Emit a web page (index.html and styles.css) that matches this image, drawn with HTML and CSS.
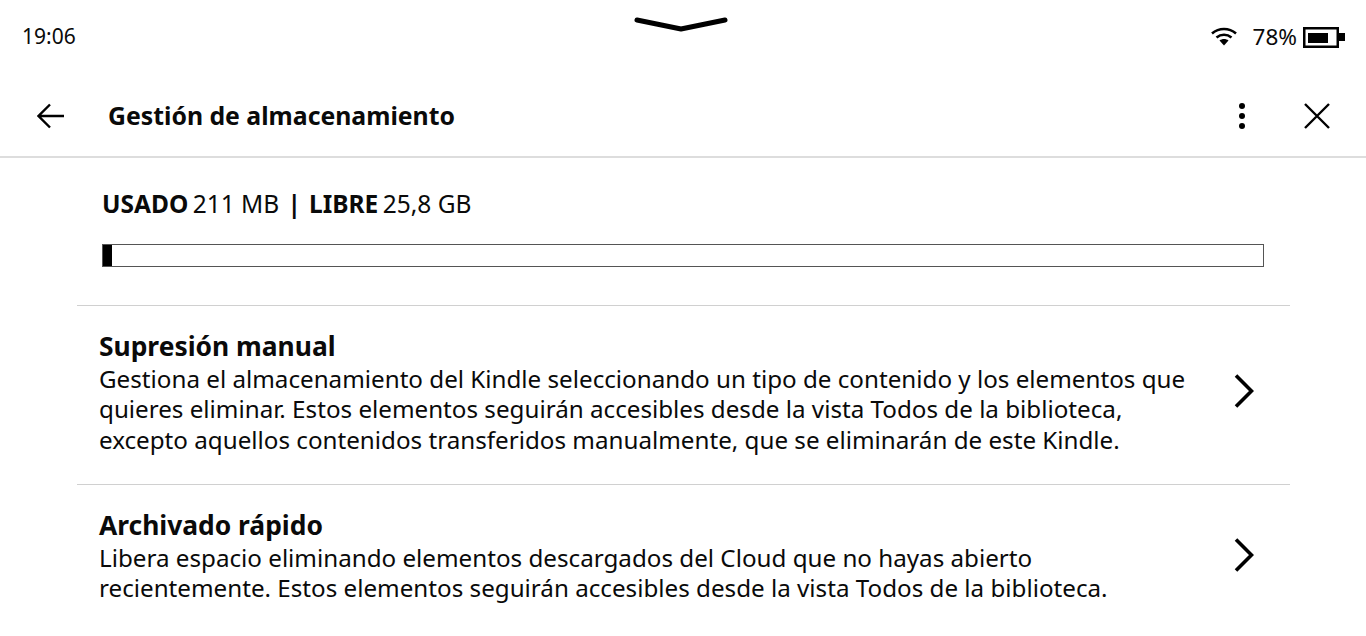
FILE: index.html
```html
<!DOCTYPE html>
<html lang="es">
<head>
<meta charset="utf-8">
<title>Gestión de almacenamiento</title>
<link rel="stylesheet" href="styles.css">
</head>
<body>
<div class="page">
  <div class="status">
    <span class="time">19:06</span>
    <svg class="handle" width="94" height="16" viewBox="0 0 94 16"><path d="M3 3 L47 12 L91 3" fill="none" stroke="#000" stroke-width="5" stroke-linecap="round" stroke-linejoin="round"/></svg>
    <div class="status-right">
      <svg class="wifi" width="26" height="19" viewBox="0 0 26 19"><path d="M1 6.5 C8 0.5 18 0.5 25 6.5" fill="none" stroke="#000" stroke-width="2.6"/><path d="M5.5 10.5 C10 6.8 16 6.8 20.5 10.5" fill="none" stroke="#000" stroke-width="2.6"/><path d="M8.5 13.6 C11 11.6 15 11.6 17.5 13.6 L13 18.5 Z" fill="#000"/></svg>
      <span class="pct">78%</span>
      <svg class="battery" width="42" height="21" viewBox="0 0 42 21"><rect x="1.25" y="1.25" width="33.5" height="18.5" fill="none" stroke="#000" stroke-width="2.5"/><rect x="5" y="6" width="20" height="10" fill="#000"/><rect x="36" y="6" width="6" height="8" fill="#000"/></svg>
    </div>
  </div>
  <header class="bar">
    <svg class="back" width="28" height="26" viewBox="0 0 28 26"><path d="M27 13 H2 M13 1.5 L1.5 13 L13 24.5" fill="none" stroke="#000" stroke-width="2.4"/></svg>
    <h1 class="title">Gestión de almacenamiento</h1>
    <svg class="dots" width="8" height="30" viewBox="0 0 8 30"><circle cx="4" cy="5" r="3"/><circle cx="4" cy="15" r="3"/><circle cx="4" cy="25" r="3"/></svg>
    <svg class="close" width="26" height="26" viewBox="0 0 26 26"><path d="M1 1 L25 25 M25 1 L1 25" fill="none" stroke="#000" stroke-width="2.4"/></svg>
  </header>
  <main class="content">
    <p class="usage"><b class="label">USADO</b> 211 MB <b class="sep">|</b> <b class="label">LIBRE</b> 25,8 GB</p>
    <div class="meter"><div class="meter-fill"></div></div>
    <section class="item item-first">
      <div class="item-text">
        <h2>Supresión manual</h2>
        <p>Gestiona el almacenamiento del Kindle seleccionando un tipo de contenido y los elementos que<br>quieres eliminar. Estos elementos seguirán accesibles desde la vista Todos de la biblioteca,<br>excepto aquellos contenidos transferidos manualmente, que se eliminarán de este Kindle.</p>
      </div>
      <svg class="chev" width="20" height="34" viewBox="0 0 20 34"><path d="M2 1.5 L17.5 17 L2 32.5" fill="none" stroke="#000" stroke-width="3.6"/></svg>
    </section>
    <section class="item">
      <div class="item-text">
        <h2>Archivado rápido</h2>
        <p>Libera espacio eliminando elementos descargados del Cloud que no hayas abierto<br>recientemente. Estos elementos seguirán accesibles desde la vista Todos de la biblioteca.</p>
      </div>
      <svg class="chev" width="20" height="34" viewBox="0 0 20 34"><path d="M2 1.5 L17.5 17 L2 32.5" fill="none" stroke="#000" stroke-width="3.6"/></svg>
    </section>
  </main>
</div>
</body>
</html>
```
FILE: styles.css
```css
* { box-sizing: border-box; }
html, body { margin: 0; padding: 0; background: #fff; }
body { font-family: "Noto Sans", "Open Sans", sans-serif; color: #0a0a0a; overflow: hidden; }
.page { width: 1366px; height: 636px; overflow: hidden; }

.status { height: 72px; display: flex; align-items: flex-start; position: relative; padding: 0 21px 0 22px; }
.time { font-size: 21px; line-height: 28px; margin-top: 22px; }
.handle { position: absolute; left: 634px; top: 17px; }
.status-right { margin-left: auto; display: flex; align-items: flex-start; }
.wifi { margin-top: 27px; }
.pct { font-size: 22.5px; line-height: 28px; margin: 23px 6px 0 16px; }
.battery { margin-top: 27px; }

.bar { height: 86px; border-bottom: 2px solid #ddd; display: flex; align-items: center; padding: 4px 36px 0 37px; }
.back { flex: none; }
.title { font-size: 24.8px; font-weight: 700; margin: 0 0 2px 43px; line-height: 32px; flex: 1; }
.dots { margin-right: 58px; }

.content { padding: 0 76px 0 77px; }
.usage { margin: 31px 0 0 25px; font-size: 24.5px; line-height: 30px; }
.label { margin-right: -2px; }
.sep { margin: 0 1.5px 0 2px; }
.meter { margin: 25px 26px 0 25px; height: 23px; border: 1px solid #555; }
.meter-fill { width: 9px; height: 100%; background: #000; }

.item { display: flex; align-items: center; border-top: 1px solid #d0d0d0; padding: 24px 0 28px 22px; }
.item-first { margin-top: 38px; }
.item-text { width: 1135px; }
.item h2 { margin: 0; font-size: 26.4px; font-weight: 700; line-height: 33.6px; }
.item p { margin: 0; font-size: 24.2px; line-height: 30.8px; white-space: nowrap; }
.chev { flex: none; margin-bottom: 3px; }
```
